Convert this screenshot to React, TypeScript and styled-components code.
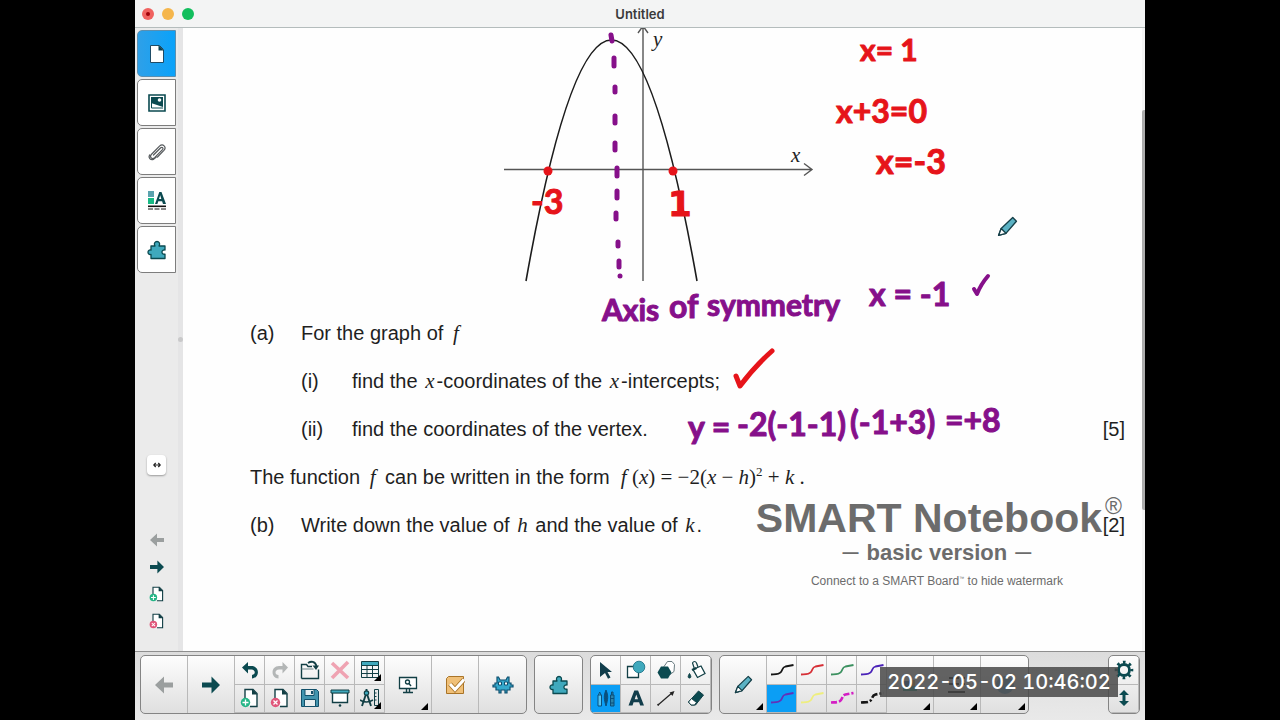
import React from "react";
import styled, { createGlobalStyle, css } from "styled-components";

const INK = "#0b4a50";
const TEAL = "#3fa9bd";
const GREY = "#9b9f9f";
const PURPLE = "#86108a";
const RED = "#e6141a";

const GlobalStyle = createGlobalStyle`
  *, *::before, *::after { box-sizing: border-box; }
  body { margin: 0; background: #000; }
  button { font: inherit; color: inherit; margin: 0; padding: 0; border: 0; background: none; }
  svg { display: block; }
`;

const Desktop = styled.div`
  min-height: 100vh;
  display: flex;
  background: #000;
  padding: 0 135px;
  font-family: "Liberation Sans", Arial, sans-serif;
`;

const AppWindow = styled.div`
  flex: 1;
  min-width: 0;
  display: flex;
  flex-direction: column;
  background: #ebebeb;
`;

const TitleBar = styled.header`
  display: grid;
  grid-template-columns: 1fr auto 1fr;
  align-items: center;
  height: 28px;
  padding: 0 7px;
  background: #f3f4f4;
  border-bottom: 1px solid #b4bcbc;
`;

const Lights = styled.div`
  display: flex;
  gap: 8px;
`;

const Light = styled.button<{ $color: string }>`
  display: grid;
  place-items: center;
  width: 12px;
  height: 12px;
  border-radius: 50%;
  background: ${(p) => p.$color};
`;

const LightDot = styled.span`
  width: 4px;
  height: 4px;
  border-radius: 50%;
  background: #a00008;
`;

const Title = styled.h1`
  margin: 0;
  font: 600 13px/16px Inter, sans-serif;
  color: #3a3a3a;
`;

const Workspace = styled.div`
  flex: 1;
  display: flex;
`;

const Sidebar = styled.aside`
  display: flex;
  flex-direction: column;
  width: 43px;
  padding: 2px 2px 21px;
  background: #ebebeb;
`;

const TabList = styled.nav`
  display: flex;
  flex-direction: column;
  gap: 2px;
`;

const Tab = styled.button<{ $active?: boolean }>`
  display: grid;
  place-items: center;
  height: 47px;
  border: 1px solid #7d7d7d;
  border-radius: 5px 0 0 5px;
  background: #fff;
  ${(p) =>
    p.$active &&
    css`
      background: linear-gradient(90deg, #2ea0e8, #0aa2fa);
      border-color: #5b8fb0;
    `}
`;

const ResizeHandle = styled.button`
  display: grid;
  place-items: center;
  align-self: center;
  width: 19px;
  height: 20px;
  margin: auto 0 56px;
  border-radius: 4px;
  background: #fff;
  box-shadow: 0 1px 2px #9a9a9a;
`;

const PageActions = styled.div`
  display: flex;
  flex-direction: column;
  align-items: center;
  gap: 9px;
`;

const PlainButton = styled.button`
  display: grid;
  place-items: center;
  width: 18px;
  height: 18px;
`;

const Splitter = styled.div`
  display: flex;
  flex-direction: column;
  align-items: center;
  justify-content: center;
  width: 5px;
  background: #e5e5e6;
`;

const SplitterDot = styled.span`
  width: 5px;
  height: 5px;
  border-radius: 50%;
  background: #c9c9ca;
`;

const Canvas = styled.main`
  position: relative;
  flex: 1;
  min-width: 0;
  padding: 0 17px 0 67px;
  background: #fefefe;
  overflow: hidden;
`;

const Graph = styled.svg`
  margin-left: 254px;
`;

const Questions = styled.div`
  display: flex;
  flex-direction: column;
  gap: 24px;
  margin-top: 39px;
  font-size: 20px;
  line-height: 24px;
  color: #1f1f1f;
`;

const Question = styled.div<{ $nested?: boolean }>`
  display: grid;
  grid-template-columns: 51px 1fr auto;
  padding-left: ${(p) => (p.$nested ? "51px" : "0")};
`;

const Statement = styled.p`
  margin: 0;
  white-space: nowrap;
`;

const Maths = styled.i<{ $roomy?: boolean }>`
  font-family: "Liberation Serif", "Times New Roman", serif;
  font-size: 21px;
  line-height: 20px;
  margin: 0 ${(p) => (p.$roomy ? "4px" : "2px")};
`;

const Formula = styled.span`
  font-family: "Liberation Serif", "Times New Roman", serif;
  font-size: 21px;
  line-height: 20px;
  margin-left: 6px;

  sup {
    font-size: 13px;
    line-height: 0;
  }
`;

const Watermark = styled.div`
  position: absolute;
  top: 468px;
  right: 20px;
  text-align: center;
  color: #6c6c6c;
`;

const WatermarkName = styled.div`
  font-size: 41px;
  font-weight: 700;
  line-height: 44px;
  white-space: nowrap;

  sup {
    margin-left: 3px;
    font-size: 23px;
    font-weight: 400;
    line-height: 0;
    vertical-align: 18px;
  }
`;

const WatermarkEdition = styled.div`
  display: flex;
  align-items: center;
  justify-content: center;
  gap: 8px;
  padding-right: 4px;
  font-size: 22px;
  font-weight: 700;
  line-height: 26px;
`;

const Dash = styled.span`
  font-size: 16px;
`;

const WatermarkHint = styled.div`
  margin-top: 8px;
  padding-right: 4px;
  font-size: 12px;
  line-height: 14px;

  sup {
    font-size: 5px;
    line-height: 0;
  }
`;

const InkLayer = styled.svg`
  position: absolute;
  top: 0;
  left: 0;
  pointer-events: none;
`;

const InkText = styled.text<{ $ink: string; $size: number; $serifed?: boolean }>`
  font-family: ${(p) => (p.$serifed ? '"DejaVu Sans"' : "Lato")}, sans-serif;
  font-size: ${(p) => p.$size}px;
  font-weight: 700;
  fill: ${(p) => p.$ink};
  stroke: ${(p) => p.$ink};
  stroke-width: 1px;
  stroke-linejoin: round;
`;

const ScrollTrack = styled.div`
  width: 3px;
  padding-top: 82px;
  background: #f4f4f4;
`;

const ScrollThumb = styled.div`
  height: 400px;
  border-radius: 2px 0 0 2px;
  background: #acacac;
`;

const Toolbar = styled.footer`
  position: relative;
  display: flex;
  gap: 7px;
  height: 69px;
  padding: 3px 5px 7px;
  border-top: 1px solid #8e8e8e;
  background: linear-gradient(#dcdcdc, #e9e9e9);
`;

const ToolGroup = styled.div<{ $end?: boolean }>`
  display: flex;
  height: 59px;
  border: 1px solid #848484;
  border-radius: 5px;
  overflow: hidden;
  background: linear-gradient(#fdfdfd, #dfdfdf);
  margin-left: ${(p) => (p.$end ? "auto" : "0")};
`;

const ToolGrid = styled.div<{ $columns: number }>`
  display: grid;
  grid-template-columns: repeat(${(p) => p.$columns}, 30px);
  grid-template-rows: 1fr 1fr;
`;

const Tool = styled.button<{ $wide?: boolean; $active?: boolean; $menu?: boolean }>`
  position: relative;
  display: grid;
  place-items: center;
  width: ${(p) => (p.$wide ? "47px" : "30px")};
  border-right: 1px solid #b9b9b9;
  border-bottom: ${(p) => (p.$wide ? "0" : "1px solid #b9b9b9")};
  background: ${(p) => (p.$active ? "#0b9ef5" : "transparent")};

  ${ToolGroup} > &:last-child {
    border-right: 0;
  }

  ${(p) =>
    p.$menu &&
    css`
      &::after {
        content: "";
        position: absolute;
        right: 3px;
        bottom: 3px;
        border-style: solid;
        border-width: 0 0 7px 7px;
        border-color: transparent transparent #000;
      }
    `}
`;

const Timestamp = styled.time`
  position: absolute;
  top: 15px;
  right: 27px;
  width: 238px;
  padding: 3px 0;
  text-align: center;
  white-space: nowrap;
  background: rgba(72, 72, 72, 0.85);
  color: #fff;
  font: 500 20px/24px Inter, sans-serif;
  font-variant-numeric: tabular-nums;
`;

/* ---------- icons ---------- */

const PageIcon = () => (
  <svg width="16" height="20" viewBox="0 0 16 20">
    <path d="M1.500 1.500h9l4 4v13h-13z" fill="#fff" stroke="#1e4b66" />
    <path d="M9.500 1v5.500h5.500z" fill="#0b4050" />
  </svg>
);

const GalleryIcon = () => (
  <svg width="18" height="18" viewBox="0 0 18 18">
    <path d="M1 1h16v16H1z" fill="#fff" stroke={INK} strokeWidth="1.600" />
    <path d="M3 3h12v10L3 9z" fill={INK} />
    <path d="M3.500 9v5h11.500" fill="none" stroke={INK} />
    <circle cx="11.500" cy="6" r="1.800" fill="#fff" />
  </svg>
);

const ClipIcon = () => (
  <svg width="20" height="20" viewBox="0 0 20 20" fill="none" stroke="#55595c" strokeLinecap="round">
    <path
      d="M6.500 13l7.200-7.200c1.400-1.300 3.100.4 1.800 1.800l-7.900 8c-2.500 2.300-5.500-.6-3.300-3.100l8.200-8.400c3.400-3.100 7.400.9 4.400 4.300l-6.400 6.600M2.500 13c-1.500 2.500 1 5.500 3.800 4.500l3-2.500"
      strokeWidth="1.200"
    />
  </svg>
);

const PropertiesIcon = () => (
  <svg width="18" height="19" viewBox="0 0 18 19">
    <path d="M0 0h6v6H0z" fill="#5ba2ae" />
    <path d="M0 7h6v6H0z" fill="#18ba85" />
    <path d="M7 13l4.300-12h2.200L18 13h-3l-.9-2.700h-3.800L9.400 13zm4-5h2.300l-1.100-3.700z" fill={INK} fillRule="evenodd" />
    <path d="M0 15.300h18" stroke="#111" strokeWidth="1.600" />
    <path d="M0 18h18" stroke="#111" strokeDasharray="5 1.500" />
  </svg>
);

const PuzzleIcon = () => (
  <svg width="20" height="20" viewBox="0 0 20 20">
    <path
      d="M4 6h4c-1.400-2.600 0-4.500 2-4.500s3.400 1.900 2 4.500h6v4c-4-.8-4.200 4.800 0 4.200v4.300H4v-4c-4 1-4-5.500 0-4.500z"
      fill={TEAL}
      stroke={INK}
      strokeWidth="1.300"
      strokeLinejoin="round"
    />
  </svg>
);

const ResizeIcon = () => (
  <svg width="8" height="6" viewBox="0 0 8 6" fill="none" stroke="#222" strokeWidth="1.200">
    <path d="M1 3h6M2.700 1L.8 3l1.900 2M5.300 1l1.900 2-1.900 2" />
  </svg>
);

const ArrowIcon = ({ size, back }: { size: number; back?: boolean }) => (
  <svg width={size} height={size} viewBox="0 0 18 18">
    {back ? (
      <path d="M0 9l9-8.500v6h9v5H9v6z" fill={GREY} />
    ) : (
      <path d="M18 9L9.500 .5v6H0v5h9.500v6z" fill={INK} />
    )}
  </svg>
);

const PageBadgeIcon = ({ size, remove }: { size: number; remove?: boolean }) => (
  <svg width={size} height={size} viewBox="0 0 20 20" fill="none">
    <path d="M5 10V1.500h8l4 4v13h-7" fill="#fff" stroke="#123f45" strokeWidth="1.400" />
    <path d="M12 1v5.500h5.500z" fill="#123f45" />
    <circle cx="5.500" cy="14.500" r="4.700" fill={remove ? "#e0567a" : "#25b586"} />
    {remove ? (
      <path d="M3.500 12.500l4 4M7.500 12.500l-4 4" stroke="#fff" strokeWidth="1.300" />
    ) : (
      <path d="M2.500 14.500h6M5.500 11.500v6" stroke="#fff" strokeWidth="1.300" />
    )}
  </svg>
);

const UndoIcon = ({ redo }: { redo?: boolean }) => (
  <svg width="18" height="18" viewBox="0 0 18 18">
    {redo ? (
      <path d="M17 6.500L11.500 1v4H8C-.5 5-.5 17 7.500 17.500V14C3 13.500 4 8.500 8 8.500h3.500v4z" fill="#b3b6b6" />
    ) : (
      <path d="M1 6.500L7 1v4h3.500c8.500 0 8.500 12 .5 12.500V14c4-.5 3.500-5.500-.5-5.500H7v4z" fill={INK} />
    )}
  </svg>
);

const OpenIcon = () => (
  <svg width="20" height="20" viewBox="0 0 20 20" fill="none">
    <path d="M1.500 18.500V4.500h5l1.500 2h4M18.500 9.500v9h-17" stroke="#123f45" strokeWidth="1.400" />
    <path d="M1.500 9h12" stroke="#6c8488" />
    <path d="M8 3c3-2 7-2 8.500 3" stroke="#123f45" strokeWidth="1.800" />
    <path d="M12.500 5.500h6.500L16 10z" fill="#123f45" />
  </svg>
);

const DeleteIcon = () => (
  <svg width="20" height="20" viewBox="0 0 20 20">
    <path d="M2 3l16 15M18 2L2 18" stroke="#efa3b2" strokeWidth="3.600" />
  </svg>
);

const TableIcon = () => (
  <svg width="20" height="20" viewBox="0 0 20 20" fill="none" stroke="#123f45">
    <path d="M1.500 1.500h17v4h-17z" fill={TEAL} />
    <path d="M1.500 5.500h17v12h-17zM1.500 9.500h17M1.500 13.500h17M7 5.500v12M12.500 5.500v12" />
  </svg>
);

const SaveIcon = () => (
  <svg width="20" height="20" viewBox="0 0 20 20">
    <path d="M1.500 1.500h15l2 2v15h-17z" fill="#4294ae" stroke="#12506a" />
    <path d="M5 1.500h9v6H5zM4.500 11.500h11v7h-11z" fill="#e8eef0" stroke="#12506a" />
    <path d="M11 3h2v3h-2z" fill="#12506a" />
  </svg>
);

const ScreenShadeIcon = () => (
  <svg width="20" height="20" viewBox="0 0 20 20">
    <path d="M2.500 4.500h15v10h-15z" fill="#fff" stroke="#123f45" strokeWidth="1.400" />
    <path d="M1 2h18v3H1z" fill={TEAL} stroke="#123f45" />
    <circle cx="10" cy="17.500" r="1.300" fill="#123f45" />
  </svg>
);

const MeasureIcon = () => (
  <svg width="20" height="20" viewBox="0 0 20 20" fill="none" stroke="#123f45">
    <path d="M6.500 1v3M6 6L2 18M7 6l4 12" strokeWidth="1.900" />
    <circle cx="6.500" cy="5" r="2.200" fill={TEAL} strokeWidth="1.200" />
    <path d="M0 12c4 2.500 9 2.500 13 0" strokeWidth="1.500" />
    <path d="M14.500 1.500h4v16h-4zM14.500 5h2M14.500 8.500h2M14.500 12h2" />
  </svg>
);

const MonitorIcon = () => (
  <svg width="20" height="18" viewBox="0 0 20 18" fill="none" stroke="#123f45">
    <path d="M1.500 1.500h17v11h-17z" fill="#fff" strokeWidth="1.300" />
    <path d="M8.500 13v3M11.500 13v3M5 16.500h10" strokeWidth="1.400" />
    <circle cx="9.500" cy="6" r="2" strokeWidth="1.300" />
    <path d="M11 7.500l2 2.500" strokeWidth="1.400" />
  </svg>
);

const AssessIcon = () => (
  <svg width="20" height="20" viewBox="0 0 20 20">
    <path d="M3.500 1.500h15v17h-17v-15z" fill="#f0c078" stroke="#a97428" strokeLinejoin="round" />
    <path d="M5 9l5 5.500L19 4.500" fill="none" stroke="#a97428" strokeWidth="4.800" />
    <path d="M5 9l5 5.500L19 4.500" fill="none" stroke="#fff" strokeWidth="3" />
  </svg>
);

const MonsterIcon = () => (
  <svg width="22" height="18" viewBox="0 0 22 18">
    <path
      d="M5 1h1.500l1.500 3h6l1.500-3H17v6h2v2h2v2h-3v3h-3v3h-2v-3H9v3H7v-3H4v-3H1V9h2V7h2z"
      fill="#35a9cc"
      stroke="#0e4f6e"
      strokeWidth="1.200"
    />
    <path d="M6.500 6h3v3h-3zM12.500 6h3v3h-3z" fill="#fff" stroke="#0e4f6e" />
  </svg>
);

const PointerIcon = () => (
  <svg width="16" height="18" viewBox="0 0 16 18">
    <path d="M2 1l12 10H9.500l3 5.500-2.500 1.300L7 12l-5 4z" fill="#113d4b" />
  </svg>
);

const ShapesIcon = () => (
  <svg width="20" height="20" viewBox="0 0 20 20" stroke="#123f45">
    <path d="M1.500 6.500h11v11h-11z" fill="#fff" strokeWidth="1.300" />
    <circle cx="13" cy="7" r="5.800" fill={TEAL} stroke="#2b7f93" />
  </svg>
);

const PolygonIcon = () => (
  <svg width="20" height="20" viewBox="0 0 20 20">
    <path d="M8 6.500l3.500-5h4.500l2.500 3-.5 7-4 3z" fill="#fff" stroke="#697b80" />
    <path d="M5 6.500h7l3.500 6-3.500 6H5L1.500 12.500z" fill={INK} />
  </svg>
);

const FillIcon = () => (
  <svg width="20" height="20" viewBox="0 0 20 20" fill="none" stroke="#123f45">
    <path d="M7 9.500l8-3.500 4 7.500-7.500 4z" fill="#fff" strokeWidth="1.300" />
    <path d="M8.500 9L6.500 3c1-2 3-2 4 0l1.500 4" strokeWidth="1.200" />
    <path d="M6 10l4.500-2" strokeWidth="2.400" />
    <path d="M3.500 13.500c2 3 1.500 4.500 0 4.500s-2-1.500 0-4.500z" fill={INK} />
  </svg>
);

const PensIcon = () => (
  <svg width="18" height="18" viewBox="0 0 18 18" fill="none" stroke="#0b4f7c">
    <path d="M1 6h3.500v11H1zM1.500 6l1.200-3L4 6" fill="#54c4f2" />
    <path d="M9 1c-2.500 6-2 9 0 16 2-7 2.500-10 0-16z" fill="#0b4f7c" />
    <path d="M13.500 6H17v11h-3.500zM14.500 6V3h1.500v3M13.500 9.500H17M13.500 14H17" fill="#2d83a8" />
  </svg>
);

const TextToolIcon = () => (
  <svg width="18" height="18" viewBox="0 0 18 18">
    <path
      d="M1.500 16.500L7.300 1.500h3.800l5.900 15h-3.800l-1.100-3.300H6.600L5.500 16.500zM7.700 10.300h3.300L9.300 5.500z"
      fill="#113d4b"
      fillRule="evenodd"
    />
  </svg>
);

const LineIcon = () => (
  <svg width="20" height="18" viewBox="0 0 20 18">
    <path d="M2 16L16.500 3.500" stroke="#222" strokeWidth="1.200" />
    <path d="M18.500 2l-5 1.500 3 3.500z" fill="#222" />
    <circle cx="2.200" cy="15.800" r="1" fill="#222" />
  </svg>
);

const EraserIcon = () => (
  <svg width="18" height="18" viewBox="0 0 18 18" stroke="#123f45">
    <path d="M11.500 2l5 4-8 10H4L1.500 13z" fill={INK} />
    <path d="M4.500 9.500l5 4L7.500 16H4l-2.500-3z" fill="#fff" />
  </svg>
);

const PencilIcon = ({ size }: { size: number }) => (
  <svg width={size} height={size} viewBox="0 0 20 20">
    <path d="M15 1.500l3.500 3.500L8.500 16.500 1.500 18.500 4 12z" fill="#5bb2c4" stroke="#153f48" strokeWidth="1.300" strokeLinejoin="round" />
    <path d="M4 12l4.500 4.500-7 2z" fill="#fff" stroke="#153f48" strokeWidth="1.300" strokeLinejoin="round" />
  </svg>
);

const StrokeIcon = ({ color, dash }: { color: string; dash?: string }) => (
  <svg width="24" height="14" viewBox="0 0 24 14">
    <path
      d="M1 11.500c4-.3 8 .2 10-2.500s1-4.500 4.500-5.500L23.500 2"
      fill="none"
      stroke={color}
      strokeWidth={dash ? 2.6 : 1.8}
      strokeDasharray={dash}
    />
  </svg>
);

const SwatchIcon = () => (
  <svg width="18" height="18" viewBox="0 0 18 18">
    <path d="M2 5h6v6H2z" fill="#2b6fb5" />
    <path d="M8 4h6v6H8z" fill="#d9b04a" />
    <path d="M2 10h14v5H2z" fill="#2aa287" />
  </svg>
);

const LineStyleIcon = () => (
  <svg width="20" height="20" viewBox="0 0 20 20" stroke="#111">
    <path d="M2 3h16M2 9h16" strokeDasharray="4 2" strokeWidth="2" />
    <path d="M1 17h17" strokeWidth="2" />
  </svg>
);

const FadeIcon = () => (
  <svg width="20" height="20" viewBox="0 0 20 20">
    <circle cx="10" cy="10" r="9" fill="#6fa5cb" />
  </svg>
);

const GearIcon = () => (
  <svg width="20" height="20" viewBox="0 0 20 20" fill="none" stroke={INK}>
    <circle cx="10" cy="10" r="5.500" strokeWidth="2.800" />
    <circle cx="10" cy="10" r="7.800" strokeWidth="3" strokeDasharray="2.600 3.526" strokeDashoffset="1.300" />
  </svg>
);

const UpDownIcon = () => (
  <svg width="12" height="16" viewBox="0 0 12 16">
    <path d="M6 0l5 5H7.500v6H11l-5 5-5-5h3.500V5H1z" fill={INK} />
  </svg>
);

/* ---------- data ---------- */

const sideTabs = [
  { label: "Page sorter", icon: <PageIcon />, active: true },
  { label: "Gallery", icon: <GalleryIcon /> },
  { label: "Attachments", icon: <ClipIcon /> },
  { label: "Properties", icon: <PropertiesIcon /> },
  { label: "Add-ons", icon: <PuzzleIcon /> },
];

const pageTools = [
  { label: "Undo", icon: <UndoIcon /> },
  { label: "Redo", icon: <UndoIcon redo /> },
  { label: "Open", icon: <OpenIcon /> },
  { label: "Delete", icon: <DeleteIcon /> },
  { label: "Table", icon: <TableIcon />, menu: true },
  { label: "Add page", icon: <PageBadgeIcon size={20} /> },
  { label: "Delete page", icon: <PageBadgeIcon size={20} remove /> },
  { label: "Save", icon: <SaveIcon /> },
  { label: "Screen shade", icon: <ScreenShadeIcon /> },
  { label: "Measurement tools", icon: <MeasureIcon />, menu: true },
];

const drawTools = [
  { label: "Select", icon: <PointerIcon /> },
  { label: "Shapes", icon: <ShapesIcon /> },
  { label: "Regular polygons", icon: <PolygonIcon /> },
  { label: "Fill", icon: <FillIcon /> },
  { label: "Pens", icon: <PensIcon />, active: true },
  { label: "Text", icon: <TextToolIcon /> },
  { label: "Lines", icon: <LineIcon /> },
  { label: "Eraser", icon: <EraserIcon /> },
];

const penStyles = [
  { label: "Black pen", color: "#151515" },
  { label: "Red pen", color: "#d62f36" },
  { label: "Green pen", color: "#3c9160" },
  { label: "Blue pen", color: "#4a22b8" },
  { label: "Purple pen", color: "#6430b8", active: true },
  { label: "Yellow highlighter", color: "#eeee7e" },
  { label: "Magenta dashed pen", color: "#d31ec4", dash: "6 2" },
  { label: "Black dashed pen", color: "#151515", dash: "7 2 2 2" },
];

const axisDashes = [
  [611, 35, 612, 41],
  [614, 58, 614, 66],
  [615, 87, 615, 92],
  [615, 116, 615, 123],
  [615, 143, 615, 150],
  [617, 168, 617, 176],
  [617, 191, 617, 198],
  [616, 213, 616, 219],
  [618, 242, 618, 246],
  [619, 261, 619, 267],
  [620, 276, 620, 276],
];

const redNotes = [
  { x: 860, y: 61, size: 30, text: "x= 1" },
  { x: 836, y: 123, size: 32, text: "x+3=0" },
  { x: 876, y: 174, size: 34, text: "x=-3" },
  { x: 531, y: 214, size: 34, text: "-3" },
];

const purpleNotes = [
  { x: 602, y: 321, size: 30, text: "Axis" },
  { x: 669, y: 318, size: 32, text: "of" },
  { x: 707, y: 316, size: 30, text: "symmetry" },
  { x: 869, y: 306, size: 32, text: "x = -1" },
  { x: 688, y: 439, size: 32, text: "y =" },
  { x: 737, y: 436, size: 32, text: "-2(-1-1)" },
  { x: 850, y: 434, size: 32, text: "(-1+3)" },
  { x: 945, y: 432, size: 32, text: "=+8" },
];

/* ---------- page ---------- */

export default function App() {
  return (
    <Desktop>
      <GlobalStyle />
      <AppWindow>
        <TitleBar>
          <Lights>
            <Light $color="#f0625f" aria-label="Close">
              <LightDot />
            </Light>
            <Light $color="#f5b64c" aria-label="Minimise" />
            <Light $color="#12be5d" aria-label="Zoom" />
          </Lights>
          <Title>Untitled</Title>
        </TitleBar>

        <Workspace>
          <Sidebar>
            <TabList>
              {sideTabs.map((t) => (
                <Tab key={t.label} aria-label={t.label} $active={t.active}>
                  {t.icon}
                </Tab>
              ))}
            </TabList>
            <ResizeHandle aria-label="Resize sidebar">
              <ResizeIcon />
            </ResizeHandle>
            <PageActions>
              <PlainButton aria-label="Previous page">
                <ArrowIcon size={14} back />
              </PlainButton>
              <PlainButton aria-label="Next page">
                <ArrowIcon size={14} />
              </PlainButton>
              <PlainButton aria-label="Add page">
                <PageBadgeIcon size={16} />
              </PlainButton>
              <PlainButton aria-label="Delete page">
                <PageBadgeIcon size={16} remove />
              </PlainButton>
            </PageActions>
          </Sidebar>
          <Splitter>
            <SplitterDot />
          </Splitter>

          <Canvas>
            <Graph width="310" height="254" viewBox="504 28 310 254" fill="none" stroke="#555">
              <path d="M504 169.500h308M804 163.500l8 6-8 6" strokeWidth="1.400" />
              <path d="M643 28v253M638 33l5-7 5 7" strokeWidth="1.400" />
              <path d="M526 281Q611.500 -201 697 281" stroke="#1c1c1c" strokeWidth="1.600" />
              <g fontFamily="Liberation Serif, serif" fontStyle="italic" fontSize="21" fill="#222" stroke="none">
                <text x="653" y="46">y</text>
                <text x="791" y="162">x</text>
              </g>
            </Graph>

            <Questions>
              <Question>
                <span>(a)</span>
                <Statement>
                  For the graph of <Maths $roomy>f</Maths>
                </Statement>
              </Question>
              <Question $nested>
                <span>(i)</span>
                <Statement>
                  find the <Maths>x</Maths>-coordinates of the <Maths>x</Maths>-intercepts;
                </Statement>
              </Question>
              <Question $nested>
                <span>(ii)</span>
                <Statement>find the coordinates of the vertex.</Statement>
                <span>[5]</span>
              </Question>
              <Statement>
                The function <Maths $roomy>f</Maths> can be written in the form
                <Formula>
                  {" "}
                  <i>f</i> (<i>x</i>) = −2(<i>x</i> − <i>h</i>)<sup>2</sup> + <i>k</i> .
                </Formula>
              </Statement>
              <Question>
                <span>(b)</span>
                <Statement>
                  Write down the value of <Maths>h</Maths> and the value of <Maths>k</Maths>.
                </Statement>
                <span>[2]</span>
              </Question>
            </Questions>

            <Watermark>
              <WatermarkName>
                SMART Notebook<sup>®</sup>
              </WatermarkName>
              <WatermarkEdition>
                <Dash>—</Dash> basic version <Dash>—</Dash>
              </WatermarkEdition>
              <WatermarkHint>
                Connect to a SMART Board<sup>™</sup> to hide watermark
              </WatermarkHint>
            </Watermark>

            <InkLayer width="960" height="623" viewBox="183 28 960 623" fill="none" strokeLinecap="round" strokeLinejoin="round">
              <g stroke={PURPLE} strokeWidth="5">
                {axisDashes.map(([x1, y1, x2, y2]) => (
                  <path key={y1} d={`M${x1} ${y1}L${x2} ${y2}`} />
                ))}
                <path d="M974 289l3 5q4-10 11-18" strokeWidth="4" />
              </g>
              <path d="M736 376l4 10q14-19 32-35" stroke={RED} strokeWidth="5" />
              <circle cx="548" cy="171" r="4.500" fill={RED} />
              <circle cx="673" cy="171" r="4.500" fill={RED} />
              {redNotes.map((n) => (
                <InkText key={n.text} x={n.x} y={n.y} $size={n.size} $ink={RED}>
                  {n.text}
                </InkText>
              ))}
              <InkText x="668" y="216" $size={34} $ink={RED} $serifed>
                1
              </InkText>
              {purpleNotes.map((n) => (
                <InkText key={n.text} x={n.x} y={n.y} $size={n.size} $ink={PURPLE}>
                  {n.text}
                </InkText>
              ))}
              <g transform="translate(997 216)">
                <PencilIcon size={21} />
              </g>
            </InkLayer>
          </Canvas>
          <ScrollTrack>
            <ScrollThumb />
          </ScrollTrack>
        </Workspace>

        <Toolbar>
          <ToolGroup>
            <Tool $wide aria-label="Previous page">
              <ArrowIcon size={18} back />
            </Tool>
            <Tool $wide aria-label="Next page">
              <ArrowIcon size={18} />
            </Tool>
            <ToolGrid $columns={5}>
              {pageTools.map((t) => (
                <Tool key={t.label} aria-label={t.label} $menu={t.menu}>
                  {t.icon}
                </Tool>
              ))}
            </ToolGrid>
            <Tool $wide $menu aria-label="Screen capture">
              <MonitorIcon />
            </Tool>
            <Tool $wide aria-label="Assessment">
              <AssessIcon />
            </Tool>
            <Tool $wide aria-label="Activity builder">
              <MonsterIcon />
            </Tool>
          </ToolGroup>

          <ToolGroup>
            <Tool $wide aria-label="Add-ons">
              <PuzzleIcon />
            </Tool>
          </ToolGroup>

          <ToolGroup>
            <ToolGrid $columns={4}>
              {drawTools.map((t) => (
                <Tool key={t.label} aria-label={t.label} $active={t.active}>
                  {t.icon}
                </Tool>
              ))}
            </ToolGrid>
          </ToolGroup>

          <ToolGroup>
            <Tool $wide $menu aria-label="Pen type">
              <PencilIcon size={19} />
            </Tool>
            <ToolGrid $columns={4}>
              {penStyles.map((p) => (
                <Tool key={p.label} aria-label={p.label} $active={p.active}>
                  <StrokeIcon color={p.color} dash={p.dash} />
                </Tool>
              ))}
            </ToolGrid>
            <Tool $wide $menu aria-label="Colour">
              <SwatchIcon />
            </Tool>
            <Tool $wide $menu aria-label="Line style">
              <LineStyleIcon />
            </Tool>
            <Tool $wide $menu aria-label="Transparency">
              <FadeIcon />
            </Tool>
          </ToolGroup>

          <ToolGroup $end>
            <ToolGrid $columns={1}>
              <Tool aria-label="Settings">
                <GearIcon />
              </Tool>
              <Tool aria-label="Move toolbar">
                <UpDownIcon />
              </Tool>
            </ToolGrid>
          </ToolGroup>
          <Timestamp>2022-05-02 10:46:02</Timestamp>
        </Toolbar>
      </AppWindow>
    </Desktop>
  );
}
